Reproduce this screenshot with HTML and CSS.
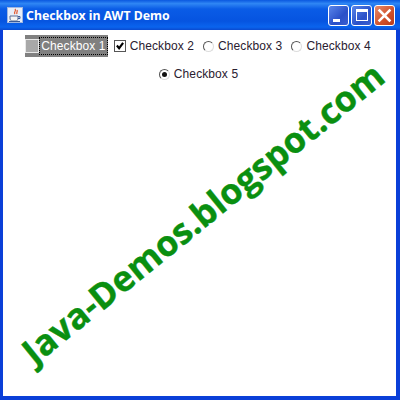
FILE: index.html
```html
<!DOCTYPE html>
<html lang="en">
<head>
    <meta charset="UTF-8">
    <title>Checkbox in AWT Demo</title>
    <link rel="stylesheet" href="styles.css">
</head>
<body>
    <div class="window">
        <div class="titlebar">
            <svg class="app-icon" width="16" height="16" viewBox="0 0 16 16">
                <rect x="0.5" y="0.5" width="15" height="15" fill="#e8eef8" stroke="#9fb6e0"/>
                <path d="M8 2c2 2-2 3 0 5M10 3c1 2-1 2 0 4" fill="none" stroke="#e2552a" stroke-width="1.2"/>
                <path d="M3 9h8v2c0 2-1 3-2 3H5c-1 0-2-1-2-3z" fill="#f4f4f4" stroke="#5a6e96"/>
                <path d="M11 9.500h2v2h-2M2 14.500h11" fill="none" stroke="#3c5a96"/>
            </svg>
            <span class="title">Checkbox in AWT Demo</span>
            <div class="controls">
                <div class="btn"><span class="min-glyph"></span></div>
                <div class="btn"><span class="max-glyph"></span></div>
                <div class="btn close">
                    <svg width="15" height="15" viewBox="0 0 15 15">
                        <path d="M2.500 2.500l10 10M12.500 2.500l-10 10" stroke="#fff" stroke-width="2.500" stroke-linecap="square"/>
                    </svg>
                </div>
            </div>
        </div>
        <div class="content">
            <div class="row first">
                <div class="item selected">
                    <span class="box"></span>
                    <span class="label">Checkbox 1</span>
                </div>
                <div class="item">
                    <span class="box checked">
                        <svg width="8" height="8" viewBox="0 0 9 9">
                            <path d="M1 4l2.500 3L8 1" fill="none" stroke="#000" stroke-width="2.400"/>
                        </svg>
                    </span>
                    <span class="label">Checkbox 2</span>
                </div>
                <div class="item"><span class="radio"></span><span class="label">Checkbox 3</span></div>
                <div class="item"><span class="radio"></span><span class="label">Checkbox 4</span></div>
            </div>
            <div class="row second">
                <div class="item"><span class="radio on"></span><span class="label">Checkbox 5</span></div>
            </div>
            <div class="watermark">Java-Demos.blogspot.com</div>
        </div>
    </div>
</body>
</html>
```
FILE: styles.css
```css
body {
    margin: 0;
    width: 400px;
    height: 400px;
    overflow: hidden;
    background: #fff;
    font-family: "Liberation Sans", Arial, sans-serif;
}
.window {
    height: 396px;
    display: flex;
    flex-direction: column;
    background: #0a3fd8;
    padding: 0 4px 4px 3px;
}
.titlebar {
    height: 30px;
    margin: 0 -4px 0 -3px;
    padding: 0 4px 0 7px;
    display: flex;
    align-items: center;
    gap: 3px;
    background: linear-gradient(#0a58e0 0%, #2f86f4 12%, #0a5ce6 30%, #0654e0 70%, #0a64ee 90%, #0a4ad0 100%);
}
.title {
    flex: 1;
    color: #fff;
    font-size: 12.300px;
    font-weight: bold;
    font-family: "Noto Sans", sans-serif;
}
.controls {
    display: flex;
    gap: 2px;
    margin-right: 1px;
}
.btn {
    width: 19px;
    height: 19px;
    border: 1px solid #fff;
    border-radius: 3px;
    display: flex;
    align-items: center;
    justify-content: center;
    position: relative;
    background: linear-gradient(135deg, #5a86ea, #2a50c8 60%, #3a5ed0);
}
.close {
    background: linear-gradient(135deg, #e88a6a, #d0502a 60%, #b83a1a);
}
.min-glyph {
    position: absolute;
    left: 4px;
    bottom: 3px;
    width: 7px;
    height: 3px;
    background: #fff;
}
.max-glyph {
    width: 10px;
    height: 8px;
    border: 1px solid #fff;
    border-top-width: 3px;
}
.content {
    flex: 1;
    position: relative;
    overflow: hidden;
    background: #fff;
    padding-top: 5px;
    display: flex;
    flex-direction: column;
    gap: 6px;
}
.row {
    display: flex;
    justify-content: center;
    gap: 9px;
}
.first {
    padding-right: 3px;
}
.second {
    padding-right: 2px;
}
.item {
    height: 22px;
    display: flex;
    align-items: center;
    gap: 4px;
    color: #2a2030;
    font-size: 12px;
    letter-spacing: 0.100px;
}
.selected {
    background: #808080;
    color: #fff;
    gap: 1px;
    padding: 0 1px 0 0;
    margin-right: -3px;
}
.selected .label {
    outline: 1px dotted #000;
    padding: 1px;
}
.box {
    width: 11px;
    height: 11px;
    flex: none;
    border: 1px solid #8a8a8a;
    background: #fff;
    display: block;
}
.selected .box {
    width: 12px;
    height: 12px;
    border-color: #e8e8e8;
    background: #a8a8a8;
}
.checked {
    width: 8px;
    height: 8px;
    border-color: #555;
    border-width: 1px;
    padding: 1px;
}
.checked svg {
    display: block;
}
.radio {
    width: 9px;
    height: 9px;
    flex: none;
    border-radius: 50%;
    border: 1px solid;
    border-color: #555 #ddd #ddd #555;
    background: #fff;
    position: relative;
}
.radio.on::after {
    content: "";
    position: absolute;
    left: 2px;
    top: 2px;
    width: 5px;
    height: 5px;
    border-radius: 50%;
    background: #111;
}
.watermark {
    position: absolute;
    left: 23px;
    top: 303px;
    white-space: nowrap;
    color: #0a8f10;
    font-family: "Open Sans", sans-serif;
    font-weight: bold;
    font-size: 35.300px;
    line-height: 44px;
    -webkit-text-stroke: 0.4px #0a8f10;
    transform-origin: left center;
    transform: rotate(-39deg);
}
```
